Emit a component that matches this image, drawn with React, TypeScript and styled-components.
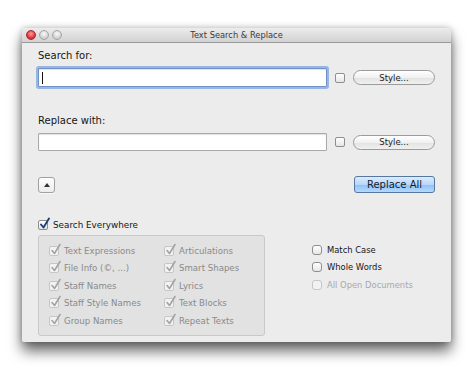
import styled, { createGlobalStyle } from "styled-components";

const GlobalStyle = createGlobalStyle`
  html, body {
    margin: 0;
    padding: 0;
    background: #ffffff;
  }
  body {
    font-family: "DejaVu Sans", "Liberation Sans", sans-serif;
    color: #1a1a1a;
  }
`;

const Page = styled.div`
  width: 474px;
  height: 372px;
  padding: 28px 0 0 22px;
  box-sizing: border-box;
`;

const Window = styled.div`
  width: 429px;
  display: flex;
  flex-direction: column;
  border-radius: 4px 4px 2px 2px;
  background: #ececec;
  box-shadow: 0 9px 14px rgba(0, 0, 0, 0.6), 0 0 6px rgba(0, 0, 0, 0.25);
  overflow: hidden;
`;

const TitleBar = styled.div`
  height: 14px;
  display: flex;
  align-items: center;
  position: relative;
  background: linear-gradient(#ececec, #d2d2d2);
  border-bottom: 1px solid #9a9a9a;
`;

const Lights = styled.div`
  display: flex;
  gap: 3px;
  padding-left: 4px;
`;

const Light = styled.span<{ $red?: boolean }>`
  width: 10px;
  height: 10px;
  border-radius: 50%;
  box-sizing: border-box;
  border: 1px solid ${({ $red }) => ($red ? "#a2262a" : "#a4a4a4")};
  background: ${({ $red }) =>
    $red
      ? "radial-gradient(circle at 50% 35%, #ff9c9c, #e0383c 60%, #c32025)"
      : "radial-gradient(circle at 50% 35%, #fafafa, #d4d4d4 60%, #bdbdbd)"};
`;

const Title = styled.div`
  position: absolute;
  left: 0;
  right: 0;
  text-align: center;
  font-size: 8.3px;
  color: #3a3a3a;
  line-height: 14px;
  pointer-events: none;
`;

const Content = styled.div`
  display: flex;
  flex-direction: column;
  padding: 6px 16px 6px 16px;
`;

const Label = styled.div<{ $top?: number }>`
  font-size: 10px;
  line-height: 13px;
  margin-top: ${({ $top }) => $top ?? 0}px;
  color: #151515;
`;

const FieldRow = styled.div<{ $height: number }>`
  display: flex;
  align-items: center;
  height: ${({ $height }) => $height}px;
  margin-top: 6px;
`;

const TextField = styled.div<{ $focused?: boolean }>`
  flex: 1;
  align-self: stretch;
  box-sizing: border-box;
  background: #fff;
  display: flex;
  align-items: center;
  padding-left: 3px;
  border: 1px solid ${({ $focused }) => ($focused ? "#6f93c9" : "#a9a9a9")};
  box-shadow: ${({ $focused }) =>
    $focused
      ? "0 0 0 2px rgba(120, 160, 220, 0.7), inset 0 1px 1px rgba(0,0,0,0.12)"
      : "inset 0 1px 1px rgba(0,0,0,0.12)"};
  border-radius: 1px;
`;

const Caret = styled.span`
  width: 1px;
  height: 12px;
  background: #111;
`;

const Box = styled.span<{ $round?: boolean; $dim?: boolean }>`
  width: 10px;
  height: 10px;
  flex: none;
  box-sizing: border-box;
  position: relative;
  border-radius: ${({ $round }) => ($round ? 3 : 2)}px;
  border: 1px solid ${({ $dim }) => ($dim ? "#c6c6c6" : "#8e8e8e")};
  background: ${({ $dim }) =>
    $dim ? "#f2f2f2" : "linear-gradient(#ffffff, #e6e6e6)"};
`;

const Check = styled.svg`
  position: absolute;
  left: 0;
  top: -4px;
  width: 11px;
  height: 13px;
  overflow: visible;
`;

const StyleButton = styled.div`
  width: 82px;
  height: 15px;
  margin-left: 8px;
  box-sizing: border-box;
  border: 1px solid #9b9b9b;
  border-radius: 8px;
  background: linear-gradient(#ffffff, #f1f1f1 50%, #e2e2e2 51%, #f0f0f0);
  display: flex;
  align-items: center;
  justify-content: center;
  font-size: 8.5px;
  color: #1b1b1b;
`;

const FieldBox = styled(Box)`
  margin-left: 8px;
`;

const ActionRow = styled.div`
  display: flex;
  justify-content: space-between;
  align-items: center;
  height: 17px;
  margin-top: 25px;
`;

const Disclosure = styled.div`
  width: 17px;
  height: 16px;
  box-sizing: border-box;
  border: 1px solid #a0a0a0;
  border-radius: 3px;
  background: linear-gradient(#ffffff, #ececec);
  display: flex;
  align-items: center;
  justify-content: center;
  box-shadow: 0 1px 0 rgba(255, 255, 255, 0.7);
`;

const Triangle = styled.span`
  width: 0;
  height: 0;
  border-left: 3px solid transparent;
  border-right: 3px solid transparent;
  border-bottom: 4px solid #333;
`;

const PrimaryButton = styled.div`
  width: 81px;
  height: 17px;
  box-sizing: border-box;
  border: 1px solid #56779f;
  border-radius: 3px;
  background: linear-gradient(#dcecfd, #b7d7fb 50%, #8fc0f4 51%, #b4dafd);
  display: flex;
  align-items: center;
  justify-content: center;
  font-size: 10px;
  color: #0f1d30;
`;

const CheckRow = styled.div<{ $dim?: boolean; $size?: number }>`
  display: flex;
  align-items: center;
  gap: 5px;
  font-size: ${({ $size }) => $size ?? 8.6}px;
  color: ${({ $dim }) => ($dim ? "#8a8a8a" : "#161616")};
`;

const EverywhereRow = styled(CheckRow)`
  height: 12px;
  margin-top: 26px;
`;

const OptionsRow = styled.div`
  display: flex;
  margin-top: 4px;
`;

const GroupBox = styled.div`
  width: 227px;
  height: 101px;
  box-sizing: border-box;
  background: #e2e2e2;
  border: 1px solid #c9c9c9;
  border-radius: 3px;
  display: grid;
  grid-template-columns: 115px 1fr;
  grid-auto-rows: 17.5px;
  align-items: center;
  padding: 6px 0 0 10px;
`;

const SideOptions = styled.div`
  display: flex;
  flex-direction: column;
  margin-left: 47px;
  padding-top: 6px;
`;

const SideRow = styled(CheckRow)`
  height: 17.5px;
  color: ${({ $dim }) => ($dim ? "#a8a8a8" : "#161616")};
`;

type Tone = "blue" | "gray";

const CheckMark = ({ tone }: { tone: Tone }) => (
  <Check viewBox="0 0 11 13">
    <path
      d="M2 7.5 L4.5 10.5 L10 1.5"
      fill="none"
      stroke={tone === "blue" ? "#1c3f7c" : "#a3a3a3"}
      strokeWidth={tone === "blue" ? 1.9 : 1.6}
      strokeLinecap="round"
      strokeLinejoin="round"
    />
  </Check>
);

const groupItems: [string, string][] = [
  ["Text Expressions", "Articulations"],
  ["File Info (©, ...)", "Smart Shapes"],
  ["Staff Names", "Lyrics"],
  ["Staff Style Names", "Text Blocks"],
  ["Group Names", "Repeat Texts"],
];

const sideItems: { label: string; dim?: boolean }[] = [
  { label: "Match Case" },
  { label: "Whole Words" },
  { label: "All Open Documents", dim: true },
];

const App: React.FC = () => {
  return (
    <>
      <GlobalStyle />
      <Page>
        <Window>
          <TitleBar>
            <Lights>
              <Light $red />
              <Light />
              <Light />
            </Lights>
            <Title>Text Search &amp; Replace</Title>
          </TitleBar>
          <Content>
            <Label>Search for:</Label>
            <FieldRow $height={19}>
              <TextField $focused>
                <Caret />
              </TextField>
              <FieldBox />
              <StyleButton>Style...</StyleButton>
            </FieldRow>
            <Label $top={27}>Replace with:</Label>
            <FieldRow $height={18}>
              <TextField />
              <FieldBox />
              <StyleButton>Style...</StyleButton>
            </FieldRow>
            <ActionRow>
              <Disclosure>
                <Triangle />
              </Disclosure>
              <PrimaryButton>Replace All</PrimaryButton>
            </ActionRow>
            <EverywhereRow $size={8.8}>
              <Box>
                <CheckMark tone="blue" />
              </Box>
              Search Everywhere
            </EverywhereRow>
            <OptionsRow>
              <GroupBox>
                {groupItems.flat().map((item) => (
                  <CheckRow key={item} $dim>
                    <Box $dim>
                      <CheckMark tone="gray" />
                    </Box>
                    {item}
                  </CheckRow>
                ))}
              </GroupBox>
              <SideOptions>
                {sideItems.map((item) => (
                  <SideRow key={item.label} $dim={item.dim} $size={8.4}>
                    <Box $round $dim={item.dim} />
                    {item.label}
                  </SideRow>
                ))}
              </SideOptions>
            </OptionsRow>
          </Content>
        </Window>
      </Page>
    </>
  );
};

export default App;
